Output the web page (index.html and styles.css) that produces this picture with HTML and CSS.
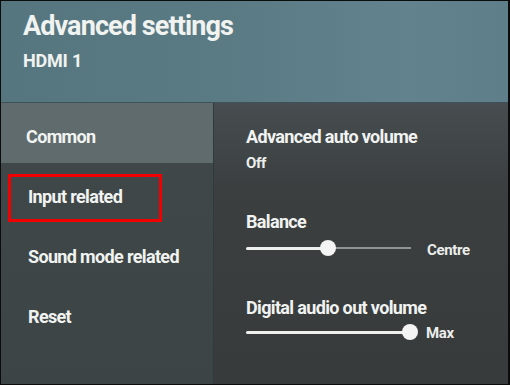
FILE: index.html
```html
<!DOCTYPE html>
<html>
<head>
<meta charset="utf-8">
<link rel="stylesheet" href="styles.css">
</head>
<body>
<div class="screen">
  <header class="header">
    <h1 class="title">Advanced settings</h1>
    <div class="subtitle">HDMI 1</div>
  </header>
  <div class="main">
    <nav class="menu">
      <div class="menu-item active">Common</div>
      <div class="menu-item"><span class="marked">Input related</span></div>
      <div class="menu-item">Sound mode related</div>
      <div class="menu-item">Reset</div>
    </nav>
    <section class="detail">
      <div class="label first">Advanced auto volume</div>
      <div class="value">Off</div>
      <div class="label balance">Balance</div>
      <div class="slider-row">
        <div class="slider">
          <div class="fill" style="width: 82px"></div>
          <div class="knob"></div>
          <div class="rest"></div>
        </div>
        <span class="slider-value centre">Centre</span>
      </div>
      <div class="label digital">Digital audio out volume</div>
      <div class="slider-row second">
        <div class="slider">
          <div class="fill" style="width: 164px"></div>
          <div class="knob"></div>
          <div class="rest"></div>
        </div>
        <span class="slider-value max">Max</span>
      </div>
    </section>
  </div>
</div>
</body>
</html>
```

FILE: styles.css
```css
* { box-sizing: border-box; }
html, body { margin: 0; padding: 0; background: #000; }
body { font-family: Roboto, "Noto Sans", sans-serif; color: #f1f3f1; }

.screen {
  width: 510px;
  height: 385px;
  border: 1px solid #0c0c0c;
  border-right-width: 2px;
  display: flex;
  flex-direction: column;
  overflow: hidden;
}

.header {
  height: 102px;
  flex: none;
  background: linear-gradient(90deg, #56767f 0%, #5a7a84 45%, #62838e 80%, #5e7f8a 100%);
  border-bottom: 1px solid #405259;
  padding: 6px 0 0 22px;
}
.title {
  margin: 0;
  font-size: 27px;
  font-weight: 700;
  letter-spacing: -0.9px;
  line-height: 38px;
}
.subtitle {
  font-size: 18px;
  font-weight: 700;
  letter-spacing: -0.2px;
  line-height: 20px;
  margin-top: 6px;
}

.main {
  flex: 1;
  display: grid;
  grid-template-columns: 212px 1fr;
}

.menu {
  background: linear-gradient(180deg, #404849 0%, #3d4445 100%);
  display: flex;
  flex-direction: column;
}
.menu-item {
  height: 60px;
  display: flex;
  align-items: flex-start;
  padding: 23px 0 0 27px;
  font-size: 18px;
  font-weight: 700;
  letter-spacing: -0.65px;
  line-height: 22px;
}
.menu-item.active {
  background: #5f6b6c;
  padding-left: 25px;
}
.marked {
  border: 3px solid #f20000;
  margin: -12px 0 0 -20px;
  padding: 9px 37px 11px 17px;
}

.detail {
  background: linear-gradient(180deg, #474d50 0%, #3b3f40 30%, #383b3b 100%);
  border-left: 1px solid #30393b;
  padding: 23px 0 0 32px;
}
.label {
  font-size: 18px;
  font-weight: 700;
  letter-spacing: -0.65px;
  line-height: 22px;
}
.value {
  font-size: 15px;
  font-weight: 700;
  letter-spacing: -0.4px;
  line-height: 18px;
  margin-top: 6px;
  color: #eceeec;
}
.label.balance { margin-top: 39px; }
.label.digital { margin-top: 34px; }

.slider-row {
  display: flex;
  align-items: center;
  height: 30px;
}
.slider-row.second { margin-top: -2px; }
.slider {
  width: 165px;
  display: flex;
  align-items: center;
  flex: none;
}
.fill {
  height: 3px;
  background: #eef0ee;
  border-radius: 2px;
  flex: none;
}
.knob {
  width: 16px;
  height: 16px;
  border-radius: 50%;
  background: #f3f4f3;
  margin: 0 -8px;
  position: relative;
  z-index: 1;
  flex: none;
}
.rest {
  flex: 1;
  height: 2px;
  background: #8e9595;
}
.slider-value {
  font-size: 15px;
  font-weight: 700;
  letter-spacing: -0.35px;
  margin-top: 3px;
  color: #eceeec;
}
.slider-value.centre { margin-left: 16px; }
.slider-value.max { margin-left: 15px; margin-top: 2px; }
```
